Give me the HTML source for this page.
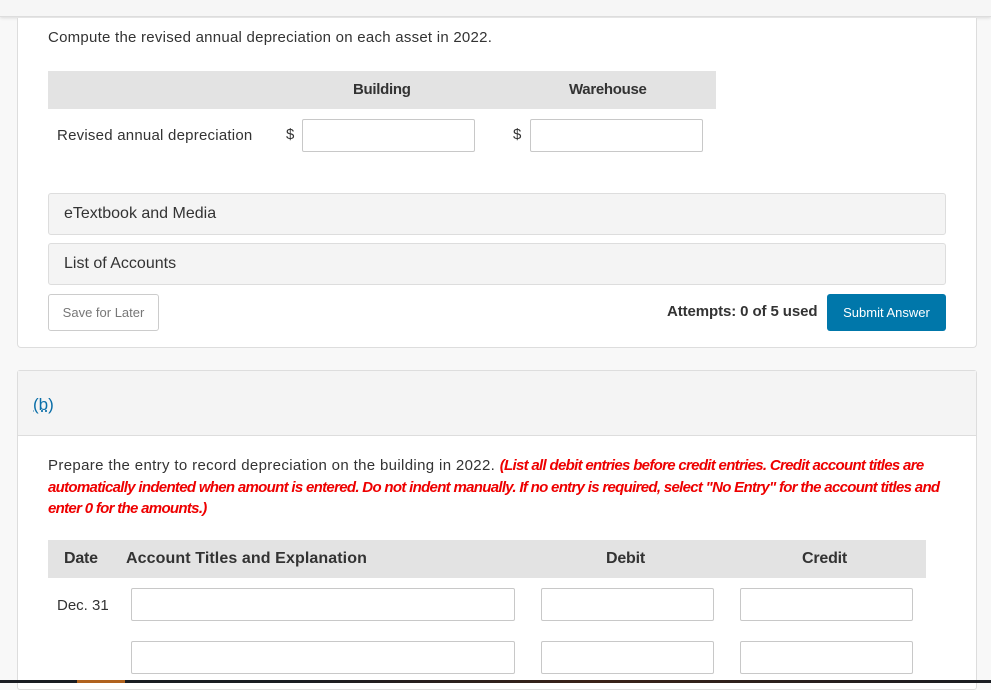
<!DOCTYPE html>
<html><head><style>
*{margin:0;padding:0;box-sizing:border-box}
body{width:991px;height:683px;position:relative;background:#f8f8f8;font-family:"Liberation Sans",sans-serif;color:#333;overflow:hidden}
.a{position:absolute;white-space:nowrap}
.inp{position:absolute;background:#fff;border:1px solid #c8c8c8;border-radius:2px}
.bar{position:absolute;background:#f4f4f4;border:1px solid #ddd;border-radius:3px;font-size:16px;padding-left:15px;line-height:40px;color:#333}
</style></head><body>
<div class="a" style="left:0;top:0;width:991px;height:17px;background:#f6f6f6;border-bottom:1px solid #ddd;box-shadow:0 1px 3px rgba(0,0,0,.12)"></div>
<div class="a" style="left:17px;top:18px;width:960px;height:330px;background:#fff;border:1px solid #ddd;border-top:none;border-radius:0 0 4px 4px"></div>
<div class="a" style="left:48px;top:29px;font-size:15px;letter-spacing:0.25px">Compute the revised annual depreciation on each asset in 2022.</div>
<div class="a" style="left:48px;top:71px;width:668px;height:38px;background:#e3e3e3"></div>
<div class="a" style="left:353px;top:81px;font-size:15px;font-weight:bold;letter-spacing:-0.3px">Building</div>
<div class="a" style="left:569px;top:81px;font-size:15px;font-weight:bold;letter-spacing:-0.3px">Warehouse</div>
<div class="a" style="left:57px;top:127px;font-size:15px;letter-spacing:0.23px">Revised annual depreciation</div>
<div class="a" style="left:286px;top:126px;font-size:15px">$</div>
<div class="inp" style="left:302px;top:119px;width:173px;height:33px"></div>
<div class="a" style="left:513px;top:126px;font-size:15px">$</div>
<div class="inp" style="left:530px;top:119px;width:173px;height:33px"></div>
<div class="bar" style="left:48px;top:193px;width:898px;height:42px">eTextbook and Media</div>
<div class="bar" style="left:48px;top:243px;width:898px;height:42px">List of Accounts</div>
<div class="a" style="left:48px;top:294px;width:111px;height:37px;border:1px solid #ccc;border-radius:3px;background:#fff;font-size:13px;color:#777;line-height:35px;text-align:center">Save for Later</div>
<div class="a" style="left:667px;top:303px;font-size:15px;font-weight:bold;letter-spacing:-0.1px;color:#333">Attempts: 0 of 5 used</div>
<div class="a" style="left:827px;top:294px;width:119px;height:37px;background:#0077aa;border-radius:3px;color:#fff;font-size:13px;line-height:37px;text-align:center;letter-spacing:0">Submit Answer</div>
<div class="a" style="left:17px;top:370px;width:960px;height:320px;background:#fff;border:1px solid #ddd;border-radius:3px"></div>
<div class="a" style="left:18px;top:371px;width:958px;height:65px;background:#f4f4f4;border-bottom:1px solid #ddd"></div>
<div class="a" style="left:33px;top:395px;font-size:17px;color:#0a6ea8;text-decoration:underline dotted">(b)</div>
<div class="a" style="left:48px;top:455px;font-size:15px;line-height:21.5px;letter-spacing:0.35px">Prepare the entry to record depreciation on the building in 2022. <b style="color:#e00;font-style:italic;letter-spacing:-0.69px">(List all debit entries before credit entries. Credit account titles are</b><br><b style="color:#e00;font-style:italic;letter-spacing:-0.69px">automatically indented when amount is entered. Do not indent manually. If no entry is required, select "No Entry" for the account titles and</b><br><b style="color:#e00;font-style:italic;letter-spacing:-0.69px">enter 0 for the amounts.)</b></div>
<div class="a" style="left:48px;top:540px;width:878px;height:38px;background:#e3e3e3"></div>
<div class="a" style="left:64px;top:550px;font-size:16px;font-weight:bold;letter-spacing:-0.2px">Date</div>
<div class="a" style="left:126px;top:550px;font-size:16px;font-weight:bold;letter-spacing:0.1px">Account Titles and Explanation</div>
<div class="a" style="left:606px;top:550px;font-size:16px;font-weight:bold;letter-spacing:-0.2px">Debit</div>
<div class="a" style="left:802px;top:550px;font-size:16px;font-weight:bold;letter-spacing:-0.2px">Credit</div>
<div class="a" style="left:57px;top:597px;font-size:15px">Dec. 31</div>
<div class="inp" style="left:131px;top:588px;width:384px;height:33px"></div>
<div class="inp" style="left:541px;top:588px;width:173px;height:33px"></div>
<div class="inp" style="left:740px;top:588px;width:173px;height:33px"></div>
<div class="inp" style="left:131px;top:641px;width:384px;height:33px"></div>
<div class="inp" style="left:541px;top:641px;width:173px;height:33px"></div>
<div class="inp" style="left:740px;top:641px;width:173px;height:33px"></div>
<div class="a" style="left:0;top:680px;width:991px;height:3px;background:linear-gradient(90deg,#1a1d22 0%,#1a1d22 30%,#3a2218 60%,#1a1d22 100%)"></div>
<div class="a" style="left:77px;top:680px;width:48px;height:3px;background:#b0621e"></div>
</body></html>
